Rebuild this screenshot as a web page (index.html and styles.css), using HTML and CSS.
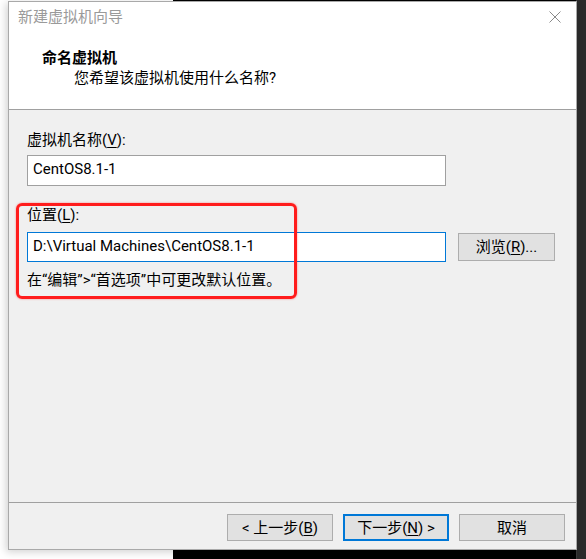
FILE: index.html
```html
<!DOCTYPE html>
<html lang="zh-CN">
<head>
<meta charset="utf-8">
<title>新建虚拟机向导</title>
<link rel="stylesheet" href="styles.css">
</head>
<body>
<div class="backdrop"><div class="backdrop-edge"></div></div>
<div class="dialog">
  <div class="titlebar">
    <span class="title">新建虚拟机向导</span>
    <svg class="close" width="12" height="12" viewBox="0 0 12 12"><path d="M0.5 0.5 L11.5 11.5 M11.5 0.5 L0.5 11.5" stroke="#8a8a8a" stroke-width="1" fill="none"/></svg>
  </div>
  <div class="header">
    <div class="heading">命名虚拟机</div>
    <div class="subtitle">您希望该虚拟机使用什么名称?</div>
  </div>
  <div class="content">
    <div class="label">虚拟机名称(<u>V</u>):</div>
    <div class="input">CentOS8.1-1</div>
    <div class="label label-loc">位置(<u>L</u>):</div>
    <div class="row">
      <div class="input input-focus">D:\Virtual Machines\CentOS8.1-1</div>
      <div class="btn btn-browse">浏览(<u>R</u>)...</div>
    </div>
    <div class="hint">在“编辑”&gt;“首选项”中可更改默认位置。</div>
  </div>
  <div class="footer">
    <div class="btn">&lt; 上一步(<u>B</u>)</div>
    <div class="btn btn-default">下一步(<u>N</u>) &gt;</div>
    <div class="btn btn-cancel">取消</div>
  </div>
  <div class="annotation"></div>
</div>
</body>
</html>
```

FILE: styles.css
```css
html, body {
  margin: 0;
  padding: 0;
  width: 586px;
  height: 559px;
  overflow: hidden;
  background: #ffffff;
  font-family: "Roboto", "Noto Sans CJK SC", sans-serif;
  font-size: 15px;
  color: #000;
}
.backdrop {
  position: absolute;
  left: 173px;
  top: 0;
  right: 0;
  bottom: 0;
  background: #000;
}
.backdrop-edge {
  position: absolute;
  right: 0;
  top: 0;
  bottom: 0;
  width: 9px;
  background: #2b2b2b;
  border-left: 1px solid #3a3a3a;
}
.dialog {
  position: absolute;
  left: 8px;
  top: 1px;
  width: 569px;
  height: 549px;
  box-sizing: border-box;
  border: 1px solid #a9a9a9;
  background: #f0f0f0;
  box-shadow: -2px 2px 8px rgba(0,0,0,0.18);
  display: flex;
  flex-direction: column;
}
.titlebar {
  height: 31px;
  background: #fff;
  display: flex;
  align-items: center;
  justify-content: space-between;
  padding: 0 15px 0 9px;
}
.title {
  color: #9a9a9a;
  line-height: 20px;
  margin-top: -1px;
}
.close {
  margin-top: -2px;
}
.header {
  background: #fff;
  padding: 15px 0 21px 33px;
  border-bottom: 1px solid #a0a0a0;
  line-height: 20px;
}
.heading {
  font-weight: bold;
}
.subtitle {
  padding-left: 32px;
}
.content {
  flex: 1;
  padding: 20px 0 0 18px;
  line-height: 20px;
}
.label-loc {
  margin-top: 19px;
}
.input {
  margin-top: 5px;
  width: 419px;
  height: 31px;
  box-sizing: border-box;
  border: 1px solid #a0a0a0;
  background: #fff;
  padding: 0 5px;
  line-height: 27px;
}
.row {
  display: flex;
  align-items: center;
  margin-top: 7px;
}
.row .input {
  margin-top: 0;
  height: 30px;
  line-height: 26px;
}
.input-focus {
  border-color: #0078d7;
}
.btn {
  width: 106px;
  height: 27px;
  box-sizing: border-box;
  border: 1px solid #adadad;
  background: #e1e1e1;
  display: flex;
  align-items: center;
  justify-content: center;
  line-height: 20px;
}
.btn-browse {
  margin-left: 12px;
  width: 97px;
  height: 28px;
}
.hint {
  margin-top: 8px;
}
.footer {
  border-top: 1px solid #a0a0a0;
  height: 47px;
  box-sizing: border-box;
  display: flex;
  justify-content: flex-end;
  padding: 11px 11px 0 0;
  gap: 10px;
}
.btn-default {
  border: 2px solid #0078d7;
}
.annotation {
  position: absolute;
  left: 7px;
  top: 201px;
  width: 281px;
  height: 96px;
  box-sizing: border-box;
  border: 3px solid #ff1c1c;
  border-radius: 6px;
  box-shadow: 0 0 2px rgba(255,0,0,0.5);
}
u {
  text-decoration-thickness: 1px;
  text-underline-offset: 2px;
}
```
